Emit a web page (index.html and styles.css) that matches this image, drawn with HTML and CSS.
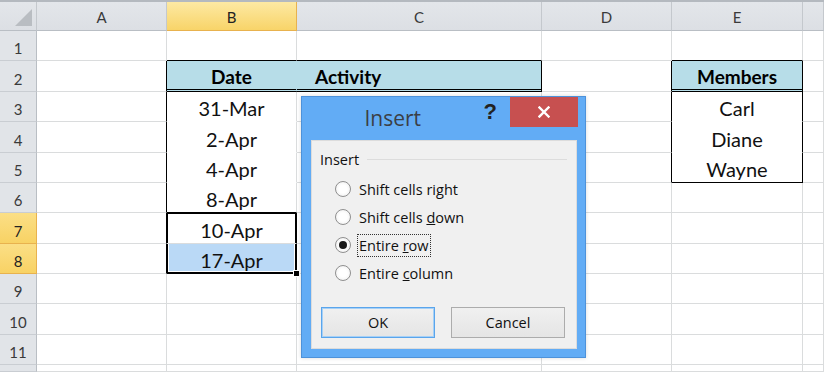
FILE: index.html
```html
<!DOCTYPE html>
<html lang="en">
<head>
  <meta charset="UTF-8">
  <title>Insert cells</title>
  <link rel="stylesheet" href="styles.css">
</head>
<body>
  <!-- Sheet -->
  <div class="sheet">
    <!-- column headers -->
    <div class="c h corner"><svg width="36" height="28" viewBox="0 0 36 28"><polygon points="32,7 32,24 15,24" fill="#b9bdc2"/></svg></div>
    <div class="c h">A</div>
    <div class="c h col-sel">B</div>
    <div class="c h">C</div>
    <div class="c h">D</div>
    <div class="c h">E</div>
    <div class="c h"></div>

    <!-- 1 -->
    <div class="c rh">1</div>
    <div class="c"></div>
    <div class="c bb"></div>
    <div class="c bb"></div>
    <div class="c"></div>
    <div class="c bb"></div>
    <div class="c"></div>

    <!-- 2 -->
    <div class="c rh">2</div>
    <div class="c br"></div>
    <div class="c th join">Date</div>
    <div class="c th br left">Activity</div>
    <div class="c br"></div>
    <div class="c th br">Members</div>
    <div class="c"></div>

    <!-- 3 -->
    <div class="c rh">3</div>
    <div class="c br"></div>
    <div class="c v bw">31-Mar</div>
    <div class="c"></div>
    <div class="c br"></div>
    <div class="c v bw br">Carl</div>
    <div class="c"></div>

    <!-- 4 -->
    <div class="c rh">4</div>
    <div class="c br"></div>
    <div class="c v bw">2-Apr</div>
    <div class="c"></div>
    <div class="c br"></div>
    <div class="c v bw br">Diane</div>
    <div class="c"></div>

    <!-- 5 -->
    <div class="c rh">5</div>
    <div class="c br"></div>
    <div class="c v bw">4-Apr</div>
    <div class="c"></div>
    <div class="c br"></div>
    <div class="c v bb br">Wayne</div>
    <div class="c"></div>

    <!-- 6 -->
    <div class="c rh">6</div>
    <div class="c br"></div>
    <div class="c v bb">8-Apr</div>
    <div class="c"></div>
    <div class="c"></div>
    <div class="c"></div>
    <div class="c"></div>

    <!-- 7 -->
    <div class="c rh row-sel">7</div>
    <div class="c br"></div>
    <div class="c v br sel-top">10-Apr</div>
    <div class="c"></div>
    <div class="c"></div>
    <div class="c"></div>
    <div class="c"></div>

    <!-- 8 -->
    <div class="c rh row-sel">8</div>
    <div class="c br"></div>
    <div class="c v br bb sel-bottom">17-Apr</div>
    <div class="c"></div>
    <div class="c"></div>
    <div class="c"></div>
    <div class="c"></div>

    <!-- 9 -->
    <div class="c rh">9</div>
    <div class="c"></div>
    <div class="c"></div>
    <div class="c"></div>
    <div class="c"></div>
    <div class="c"></div>
    <div class="c"></div>

    <!-- 10 -->
    <div class="c rh">10</div>
    <div class="c"></div>
    <div class="c"></div>
    <div class="c"></div>
    <div class="c"></div>
    <div class="c"></div>
    <div class="c"></div>

    <!-- 11 -->
    <div class="c rh">11</div>
    <div class="c"></div>
    <div class="c"></div>
    <div class="c"></div>
    <div class="c"></div>
    <div class="c"></div>
    <div class="c"></div>

    <!-- 12 (cut off) -->
    <div class="c rh"></div>
    <div class="c"></div>
    <div class="c"></div>
    <div class="c"></div>
    <div class="c"></div>
    <div class="c"></div>
    <div class="c"></div>
  </div>

  <!-- Insert dialog -->
  <div class="dialog">
    <div class="titlebar">
      <span class="title">Insert</span>
      <span class="help">?</span>
      <span class="close">
        <svg width="12" height="12" viewBox="0 0 12 12"><path d="M1.5 1.5 L10.5 10.5 M10.5 1.5 L1.5 10.5" stroke="#fff" stroke-width="2.4" stroke-linecap="square"/></svg>
      </span>
    </div>
    <div class="client">
      <div class="legend"><span>Insert</span><i></i></div>
      <div class="opt"><span class="radio"></span><span>Shift cells ri<u>g</u>ht</span></div>
      <div class="opt"><span class="radio"></span><span>Shift cells <u>d</u>own</span></div>
      <div class="opt"><span class="radio on"></span><span class="focus">Entire <u>r</u>ow</span></div>
      <div class="opt"><span class="radio"></span><span>Entire <u>c</u>olumn</span></div>
      <div class="buttons">
        <button class="btn default">OK</button>
        <button class="btn">Cancel</button>
      </div>
    </div>
  </div>
</body>
</html>
```

FILE: styles.css
```css
body {
  margin: 0;
  width: 824px;
  height: 372px;
  overflow: hidden;
  background: #fff;
  font-family: 'Lato', 'Liberation Sans', sans-serif;
  position: relative;
}
.sheet {
  display: grid;
  grid-template-columns: 37px 130px 130px 245px 130px 131px 1fr;
  grid-template-rows: 29px 30px 31px 30px 31px 30px 30px 31px 30px 30px 31px 30px 7px;
  border-top: 2px solid #b4b9bf;
}
.c {
  box-sizing: border-box;
  border-right: 1px solid #dadcdd;
  border-bottom: 1px solid #dadcdd;
  display: flex;
  align-items: center;
  justify-content: center;
  overflow: hidden;
}
.h {
  background: linear-gradient(#e3e6ea, #dcdfe4);
  border-right-color: #c4c8cd;
  border-bottom-color: #b9bec4;
  color: #3a3a3a;
  font-size: 15px;
  padding-top: 1px;
}
.corner {
  padding: 0;
  align-items: flex-start;
  justify-content: flex-start;
}
.rh {
  background: #e1e4e8;
  border-right-color: #b9bec4;
  border-bottom-color: #c9cdd2;
  color: #3a3a3a;
  font-size: 15px;
  padding-top: 5px;
}
.col-sel {
  background: linear-gradient(#fde9a3, #f8d469);
  border-right-color: #e8b24e;
  border-bottom-color: #e8b24e;
  color: #222;
}
.row-sel {
  background: linear-gradient(#fbdf86, #f8d264);
  border-right-color: #e8b24e;
  border-bottom-color: #e8b24e;
  color: #222;
}
.bb { border-bottom-color: #000; }
.br { border-right-color: #000; }
.bw { border-bottom-color: #fff; }
.th {
  background: #b7dde8;
  border-bottom: 3px double #000;
  font-weight: 700;
  font-size: 19px;
  color: #000;
  padding-top: 2px;
}
.join { border-right-color: #b7dde8; }
.left {
  justify-content: flex-start;
  padding-left: 18px;
}
.v {
  font-size: 20px;
  color: #111;
  padding-top: 3px;
}
.sel-top {
  box-shadow: inset 1px 1px 0 #000, inset -1px 0 0 #000;
}
.sel-bottom {
  background: #bad9f6;
  box-shadow: inset 1px 0 0 #000, inset -1px -1px 0 #000, inset 2px 0 0 #fff, inset -2px -2px 0 #fff;
  position: relative;
  overflow: visible;
}
.sel-bottom::after {
  content: '';
  position: absolute;
  right: -4px;
  bottom: -4px;
  width: 5px;
  height: 5px;
  background: #000;
  border: 1px solid #fff;
}

/* dialog */
.dialog {
  position: absolute;
  left: 301px;
  top: 96px;
  width: 285px;
  height: 262px;
  box-sizing: border-box;
  background: #62acf5;
  border: 1px solid #4d92da;
  box-shadow: 0 0 4px rgba(0, 0, 0, 0.15);
  display: flex;
  flex-direction: column;
  font-family: 'Open Sans', 'Noto Sans', sans-serif;
}
.titlebar {
  height: 43px;
  display: flex;
  align-items: flex-start;
}
.title {
  flex: 1;
  text-align: center;
  font-size: 21px;
  line-height: 26px;
  padding-top: 8px;
  color: #3b3f46;
}
.help {
  font-family: 'Liberation Sans', sans-serif;
  font-weight: 700;
  font-size: 22px;
  line-height: 24px;
  padding-top: 3px;
  margin-right: 13px;
  color: #222;
}
.close {
  width: 68px;
  height: 30px;
  background: #c75050;
  margin-right: 7px;
  display: flex;
  align-items: center;
  justify-content: center;
}
.client {
  flex: 1;
  margin: 0 8px 8px 9px;
  background: #f0f0f0;
  border: 1px solid #dcdcdc;
  box-sizing: border-box;
  font-size: 14.5px;
  color: #111;
}
.legend {
  display: flex;
  align-items: center;
  height: 20px;
  margin: 8px 9px 0 8px;
}
.legend i {
  flex: 1;
  height: 1px;
  background: #dcdcdc;
  margin-left: 8px;
}
.opt {
  display: flex;
  align-items: center;
  height: 28px;
  padding-left: 23px;
}
.legend + .opt { margin-top: 6px; }
.radio {
  width: 16px;
  height: 16px;
  box-sizing: border-box;
  border-radius: 50%;
  border: 1px solid #8f8f8f;
  background: radial-gradient(#fff 40%, #eaeaea);
  margin-right: 8px;
  display: flex;
  align-items: center;
  justify-content: center;
}
.radio.on::after {
  content: '';
  width: 8px;
  height: 8px;
  border-radius: 50%;
  background: #1a1a1a;
}
.focus {
  outline: 1px dotted #333;
  outline-offset: 1px;
}
.buttons {
  display: flex;
  gap: 16px;
  margin: 20px 0 0 9px;
}
.btn {
  width: 114px;
  height: 31px;
  font-family: inherit;
  font-size: 14.5px;
  color: #111;
  background: linear-gradient(#f0f0f0, #e5e5e5);
  border: 1px solid #acacac;
  padding: 0;
}
.btn.default {
  border-color: #5aa5ec;
  box-shadow: inset 0 0 0 1px #a6d0f6;
}
```
